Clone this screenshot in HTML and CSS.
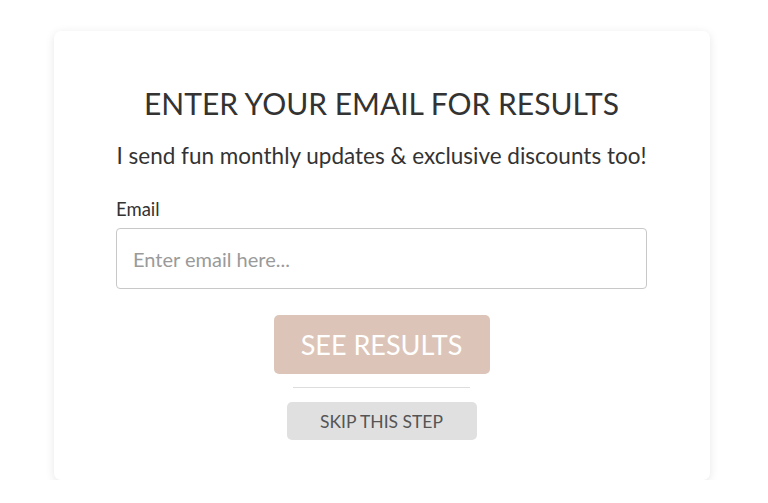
FILE: index.html
```html
<!DOCTYPE html>
<html>
<head>
<meta charset="utf-8">
<link rel="stylesheet" href="styles.css">
</head>
<body>
<div class="card">
  <h1 class="title">ENTER YOUR EMAIL FOR RESULTS</h1>
  <p class="subtitle">I send fun monthly updates &amp; exclusive discounts too!</p>
  <label class="label" for="email">Email</label>
  <input class="input" id="email" type="text" placeholder="Enter email here...">
  <div class="actions">
    <button class="btn-primary">SEE RESULTS</button>
    <div class="divider"></div>
    <button class="btn-skip">SKIP THIS STEP</button>
  </div>
</div>
</body>
</html>
```

FILE: styles.css
```css
html, body {
  margin: 0;
  padding: 0;
  background: #ffffff;
}
body {
  font-family: Lato, "Noto Sans", sans-serif;
  color: #333333;
  padding: 31px 0 0 54px;
}
.card {
  box-sizing: border-box;
  width: 656px;
  height: 449px;
  background: #fff;
  border-radius: 7px;
  box-shadow: 0 2px 10px rgba(0,0,0,0.10);
  padding: 52px 63px 0 62px;
  display: flex;
  flex-direction: column;
}
.title {
  margin: 0;
  font-weight: 400;
  font-size: 30px;
  line-height: 40px;
  text-align: center;
  color: #333;
}
.subtitle {
  margin: 18px 0 0;
  font-size: 22.5px;
  line-height: 30px;
  text-align: center;
  color: #333;
}
.label {
  margin-top: 27px;
  font-size: 18.5px;
  line-height: 22px;
  color: #333;
}
.input {
  margin-top: 8px;
  box-sizing: border-box;
  width: 531px;
  height: 61px;
  border: 1px solid #c8c8c8;
  border-radius: 4px;
  padding: 0 16px;
  font-family: inherit;
  font-size: 20px;
  color: #333;
  outline: none;
}
.input::placeholder {
  color: #9a9a9a;
}
.actions {
  display: flex;
  flex-direction: column;
  align-items: center;
  margin-top: 26px;
}
.btn-primary {
  width: 216px;
  height: 59px;
  border: none;
  border-radius: 5px;
  background: #dcc5b8;
  color: #fff;
  font-family: inherit;
  font-size: 27px;
  padding: 0;
}
.divider {
  width: 177px;
  height: 1px;
  background: #dddddd;
  margin-top: 13px;
}
.btn-skip {
  margin-top: 14px;
  width: 190px;
  height: 38px;
  border: none;
  border-radius: 5px;
  background: #e0e0e0;
  color: #555;
  font-family: inherit;
  font-size: 17.5px;
  padding: 0;
}
```
